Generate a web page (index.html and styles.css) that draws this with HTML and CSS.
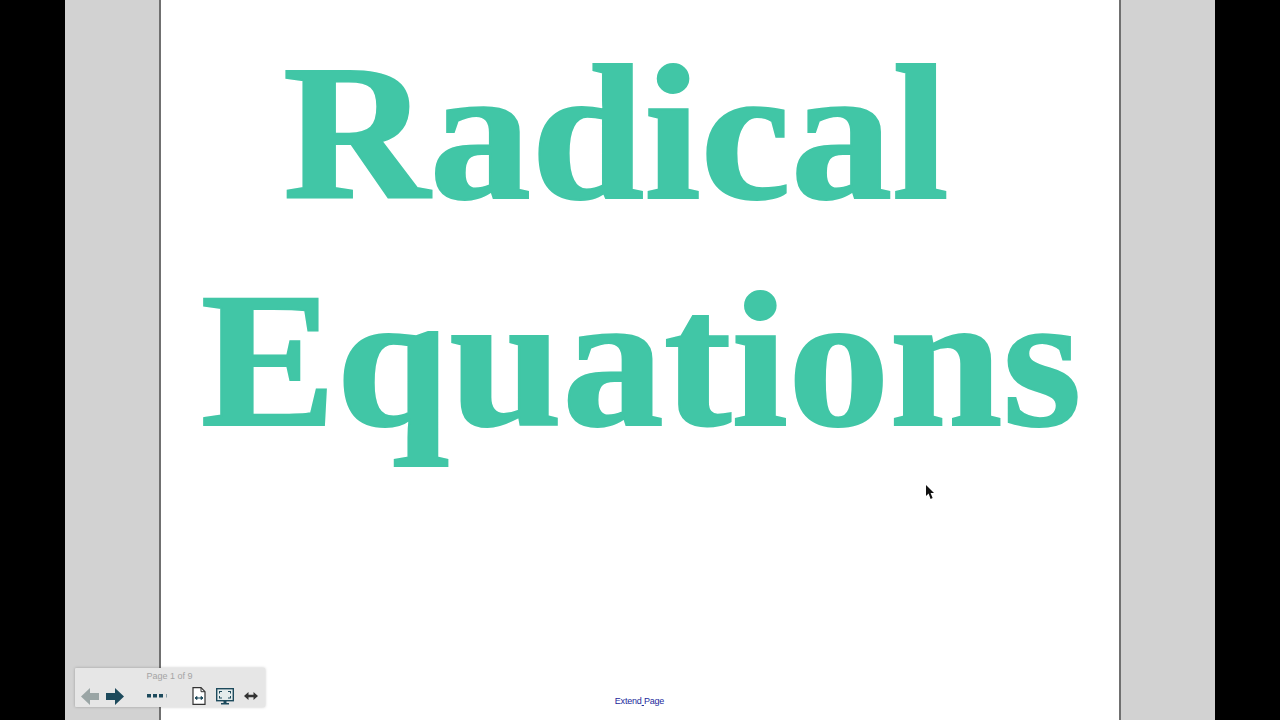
FILE: index.html
```html
<!DOCTYPE html>
<html lang="en">
<head>
<meta charset="utf-8">
<title>Radical Equations</title>
<link rel="stylesheet" href="styles.css">
</head>
<body>
<div class="viewer">
  <main class="page">
    <h1 class="title">Radical&nbsp;<br>Equations</h1>
    <a class="extend">Extend<span class="gap"> </span>Page</a>
    <svg class="cursor" width="10" height="15" viewBox="0 0 10 15"><path d="M1 0v11l2.600-2.400L5.600 14l2-.9-2-5H9z" fill="#111"/></svg>
  </main>
  <div class="toolbar">
    <div class="pageno">Page 1 of 9</div>
    <div class="tools">
      <svg class="t-back" width="18" height="17" viewBox="0 0 18 17"><path d="M9 0 0 8.500 9 17v-5h9V5H9z" fill="#9aa5a5"/></svg>
      <svg class="t-next" width="18" height="17" viewBox="0 0 18 17"><path d="M9 0l9 8.500L9 17v-5H0V5h9z" fill="#1d4a5c"/></svg>
      <svg class="t-dots" width="20" height="4" viewBox="0 0 20 4"><path d="M0 0h4v3.500H0zM6 0h4v3.500H6zM12 0h4v3.500h-4z" fill="#1d4a5c"/><path d="M19 0h1v3.500h-1z" fill="#8aa0a8"/></svg>
      <svg class="t-fitw" width="14" height="18" viewBox="0 0 14 18"><path d="M1 .7h8l4 4v12.600H1z" fill="#fff" stroke="#333" stroke-width="1.200"/><path d="M9 .7v4h4" fill="none" stroke="#333"/><path d="M3 11h8M3 11l2-1.500v3zM11 11l-2-1.500v3z" stroke="#1d4a5c" fill="#1d4a5c"/></svg>
      <svg class="t-full" width="18" height="17" viewBox="0 0 18 17"><rect x=".7" y=".7" width="16.600" height="12" fill="#e4ecec" stroke="#1d4a5c" stroke-width="1.400"/><path d="M3 3h3v1H4v1.500H3zM15 3h-3v1h2v1.500h1zM3 10.500h3v-1H4V8H3zM15 10.500h-3v-1h2V8h1z" fill="#1d4a5c"/><path d="M7.500 13h3v2h-3zM5 15h8v1.500H5z" fill="#1d4a5c"/></svg>
      <svg class="t-width" width="14" height="10" viewBox="0 0 14 10"><path d="M0 5l4.500-4v2.800h5V1L14 5 9.500 9V6.200h-5V9z" fill="#333"/></svg>
    </div>
  </div>
</div>
</body>
</html>
```
FILE: styles.css
```css
* { box-sizing: border-box; }
html, body { margin: 0; height: 100%; }
body { background: #000; overflow: hidden; }
.viewer {
  position: relative;
  width: 1150px;
  height: 720px;
  margin-left: 65px;
  background: #d2d2d2;
  display: flex;
  justify-content: center;
}
.page {
  position: relative;
  width: 962px;
  margin-left: -1px;
  height: 720px;
  background: #fff;
  border-left: 2px solid #707070;
  border-right: 2px solid #707070;
  display: flex;
  flex-direction: column;
  align-items: center;
}
.title {
  margin: 20px 0 0 3px;
  font: 700 192px/227px "Liberation Serif", serif;
  color: #41c6a6;
  text-align: center;
  white-space: nowrap;
  -webkit-text-stroke: 2px #41c6a6;
  transform: scaleX(1.058);
}
.extend {
  position: absolute;
  left: 0; right: 0;
  top: 696px;
  text-align: center;
  font: 9px/11px "Liberation Sans", sans-serif;
  letter-spacing: -.2px;
  color: #1c2a9c;
}
.gap { text-decoration: underline; }
.cursor { position: absolute; left: 764px; top: 485px; }
.toolbar {
  position: absolute;
  left: 10px;
  top: 668px;
  width: 190px;
  height: 39px;
  background: #e6e6e6;
  box-shadow: 0 0 3px rgba(0,0,0,.25);
  border-radius: 1px;
}
.pageno {
  font: 9px/14px "Liberation Sans", sans-serif;
  color: #a4a4a4;
  text-align: center;
  margin-left: -1px;
  padding-top: 1px;
}
.tools {
  display: flex;
  align-items: center;
  height: 20px;
  margin-top: 3px;
  padding-left: 6px;
}
.t-next { margin-left: 7px; }
.t-dots { margin-left: 23px; }
.t-fitw { margin-left: 25px; }
.t-full { margin-left: 10px; }
.t-width { margin-left: 10px; }
```
